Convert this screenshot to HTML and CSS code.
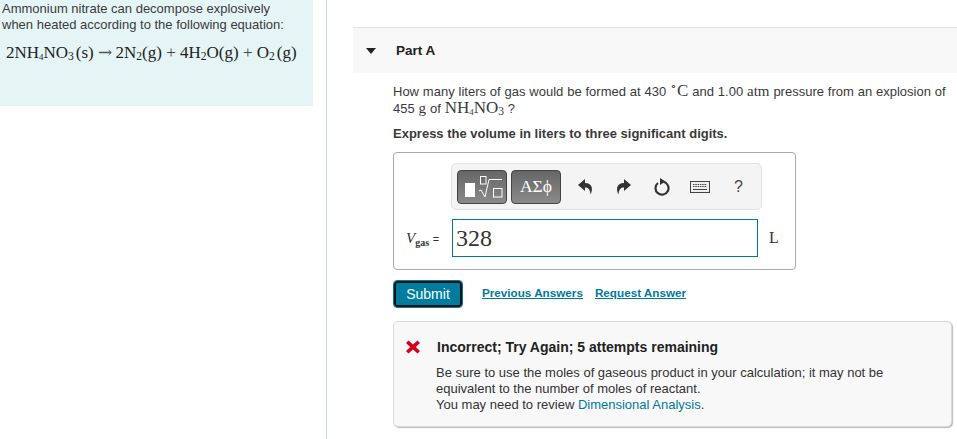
FILE: index.html
```html
<!DOCTYPE html>
<html lang="en">
<head>
    <meta charset="UTF-8">
    <meta name="viewport" content="width=device-width, initial-scale=1.0">
    <title>Part A</title>
    <link rel="stylesheet" href="styles.css">
</head>
<body>

    <div class="page">
        <!-- Intro panel on the left -->
        <aside class="sidebar">
            <div class="intro">
                <p class="intro-text">Ammonium nitrate can decompose explosively<br>when heated according to the following equation:</p>
                <p class="equation">2NH<sub class="tiny">4</sub>NO<sub>3</sub><span class="gap">(s)</span> <span class="arrow">→</span> 2N<sub>2</sub>(g) <span class="op">+</span> 4H<sub>2</sub>O(g) <span class="op">+</span> O<sub>2</sub><span class="gap">(g)</span></p>
            </div>
        </aside>

        <main class="content">
            <div class="part-header">
                <span class="caret"></span>
                <h2>Part A</h2>
            </div>

            <div class="part-body">
                <p class="question">How many liters of gas would be formed at 430 <span class="math"><sup>∘</sup><span class="big">C</span></span> and 1.00 <span class="math">atm</span> pressure from an explosion of<br>455 <span class="math">g</span> of <span class="math big">NH<sub class="tiny">4</sub>NO<sub>3</sub></span> ?</p>
                <p class="instruction">Express the volume in liters to three significant digits.</p>

                <!-- Answer box with math toolbar -->
                <div class="answer-box">
                    <div class="toolbar">
                        <button class="tool-btn templates">
                            <svg width="48" height="32" viewBox="0 0 48 32">
                                <rect x="7" y="12" width="10" height="14" fill="#fff"/>
                                <rect x="22.500" y="5.500" width="5.500" height="7.500" fill="none" stroke="#fff"/>
                                <path d="M21 20l2-1 4 7 4-17.500h13" fill="none" stroke="#fff"/>
                                <rect x="35.500" y="17.500" width="8.500" height="8.500" fill="none" stroke="#fff"/>
                            </svg>
                        </button>
                        <button class="tool-btn symbols">ΑΣϕ</button>

                        <div class="actions">
                            <svg class="action undo" width="16" height="16" viewBox="0 0 16 16"><path d="M7 0L0 6l7 6V8.500c3 0 5 1.500 5.500 7C15 11 15 4 7 4z" fill="#333"/></svg>
                            <svg class="action redo" width="16" height="16" viewBox="0 0 16 16"><path d="M9 0l7 6-7 6V8.500c-3 0-5 1.500-5.500 7C1 11 1 4 9 4z" fill="#333"/></svg>
                            <svg class="action reset" width="18" height="18" viewBox="0 0 18 18"><path d="M10.500 3.800a6.500 6.500 0 1 1-5.500 1.200" fill="none" stroke="#333" stroke-width="2.200"/><path d="M7 0l5.500 3.500L7 7z" fill="#333"/></svg>
                            <svg class="action keyboard" width="20" height="12" viewBox="0 0 20 12">
                                <rect x=".5" y=".5" width="19" height="11" fill="#eee" stroke="#444"/>
                                <path d="M3 3.500h14M3 5.500h14" stroke="#444" stroke-dasharray="1.500 .8"/>
                                <path d="M3 8.500h14" stroke="#444"/>
                            </svg>
                            <span class="help">?</span>
                        </div>
                    </div>

                    <div class="answer-row">
                        <span class="answer-label"><i>V</i><sub>gas</sub> <span class="equals">=</span></span>
                        <input class="answer-input" type="text" value="328">
                        <span class="unit">L</span>
                    </div>
                </div>

                <div class="submit-row">
                    <button class="submit">Submit</button>
                    <a class="answer-link first" href="#">Previous Answers</a>
                    <a class="answer-link" href="#">Request Answer</a>
                </div>

                <!-- Feedback -->
                <div class="feedback">
                    <div class="feedback-title">
                        <svg width="14" height="14" viewBox="0 0 14 14"><path d="M0 3L2.500 0.500 7 4.500 11.500 0.500 14 3 9.800 7 14 11 11.500 13.500 7 9.500 2.500 13.500 0 11 4.200 7z" fill="#d6001c"/></svg>
                        <strong>Incorrect; Try Again; 5 attempts remaining</strong>
                    </div>
                    <p class="feedback-text">Be sure to use the moles of gaseous product in your calculation; it may not be<br>equivalent to the number of moles of reactant.<br>You may need to review <a href="#">Dimensional Analysis</a>.</p>
                </div>
            </div>
        </main>
    </div>

</body>
</html>
```

FILE: styles.css
```css
body {
    font-family: 'Liberation Sans', Arial, sans-serif;
    font-size: 13px;
    color: #333;
    background-color: #fff;
    margin: 0;
}

p {
    margin: 0;
}

.page {
    display: flex;
    height: 439px;
    overflow: hidden;
}

/* Left column */
.sidebar {
    width: 326px;
    flex-shrink: 0;
    border-right: 1px solid #c6d6e6;
}

.intro {
    width: 311px;
    height: 105px;
    padding: 1px 0 0 2px;
    background-color: #e5f5f6;
}

.intro-text {
    line-height: 16px;
    color: #3a3a3a;
}

.equation {
    margin: 8px 0 0 4px;
    font-family: 'Liberation Serif', serif;
    font-size: 17px;
    line-height: 24px;
    white-space: nowrap;
    color: #222;
}

sub {
    font-size: 68%;
    line-height: 0;
    vertical-align: -2px;
}

sub.tiny {
    font-size: 52%;
}

.gap {
    margin-left: 2px;
}

.arrow {
    margin-right: -1px;
    font-family: 'DejaVu Serif', serif;
    font-size: 17px;
    line-height: 0;
    color: #555;
}

.op {
    color: #444;
}

/* Right column */
.content {
    flex: 1;
    padding: 27px 0 0 26px;
    min-width: 0;
}

.part-header {
    display: flex;
    align-items: center;
    height: 45px;
    border-top: 1px solid #e4e4e4;
    background-color: #f8f8f8;
}

.caret {
    width: 0;
    height: 0;
    margin-left: 13px;
    border-left: 5px solid transparent;
    border-right: 5px solid transparent;
    border-top: 6px solid #222;
}

.part-header h2 {
    margin: 0 0 0 20px;
    font-size: 13.500px;
    font-weight: bold;
    color: #222;
}

.part-body {
    padding: 10px 0 0 40px;
}

.question {
    line-height: 17px;
    white-space: nowrap;
    word-spacing: 0.25px;
    color: #3a3a3a;
}

.math {
    font-family: 'Liberation Serif', serif;
    font-size: 15px;
    line-height: 0;
}

.big {
    font-size: 17px;
}

.math sup {
    font-size: 11px;
    line-height: 0;
}

.instruction {
    margin-top: 9px;
    font-size: 13px;
    line-height: 16px;
    font-weight: bold;
    color: #3a3a3a;
}

.answer-box {
    width: 401px;
    height: 116px;
    margin-top: 10px;
    border: 1px solid #aaa;
    border-radius: 4px;
}

.toolbar {
    display: flex;
    align-items: center;
    width: 304px;
    height: 45px;
    margin: 10px 0 0 57px;
    padding-left: 5px;
    background-color: #f4f4f4;
    border: 1px solid #e2e2e2;
    border-radius: 5px;
}

.tool-btn {
    height: 34px;
    padding: 0;
    border: 1px solid #444;
    border-radius: 4px;
    background: linear-gradient(#666, #8a8a8a);
    color: #fff;
    font-family: 'Liberation Serif', serif;
    font-size: 17.500px;
}

.templates {
    width: 50px;
    margin-right: 4px;
}

.templates svg {
    display: block;
}

.symbols {
    width: 50px;
}

.actions {
    display: flex;
    align-items: center;
    margin-left: 17px;
}

.action {
    flex-shrink: 0;
}

.redo {
    margin-left: 21px;
}

.reset {
    margin-left: 22px;
}

.keyboard {
    margin-left: 19px;
}

.help {
    margin-left: 24px;
    font-size: 16px;
    color: #444;
}

.answer-row {
    display: flex;
    align-items: center;
    margin-top: 9px;
}

.answer-label {
    width: 58px;
    padding-left: 12px;
    box-sizing: border-box;
    font-family: 'Liberation Serif', serif;
    font-size: 15px;
    white-space: nowrap;
    color: #333;
}

.answer-label sub {
    font-size: 10px;
    font-weight: bold;
    vertical-align: -3px;
}

.equals {
    font-family: 'Liberation Sans', sans-serif;
    font-size: 11px;
}

.answer-input {
    width: 306px;
    height: 38px;
    box-sizing: border-box;
    padding: 0 3px;
    border: 1px solid #007a9c;
    font-family: 'Liberation Serif', serif;
    font-size: 24px;
    color: #333;
}

.unit {
    margin-left: 11px;
    font-family: 'Liberation Serif', serif;
    font-size: 16px;
}

.submit-row {
    display: flex;
    align-items: center;
    margin-top: 11px;
}

.submit {
    width: 68px;
    height: 26px;
    margin-left: 1px;
    padding: 0;
    background-color: #007d9e;
    color: #fff;
    border: 2px solid #111;
    outline: 1px solid #007d9e;
    border-radius: 3px;
    font-family: 'Liberation Sans', sans-serif;
    font-size: 14px;
}

.answer-link {
    margin-left: 12px;
    font-size: 11.700px;
    font-weight: bold;
    color: #007a9c;
    position: relative;
    top: -2px;
}

.answer-link.first {
    margin-left: 20px;
}

.feedback {
    box-sizing: border-box;
    width: 559px;
    height: 106px;
    margin-top: 14px;
    padding: 17px 12px;
    background-color: #f8f8f8;
    border: 1px solid #d8d8d8;
    border-radius: 5px;
    box-shadow: 1px 1px 1px #bbb;
}

.feedback-title {
    display: flex;
    align-items: center;
    gap: 17px;
    font-size: 14px;
    color: #222;
}

.feedback-text {
    margin: 10px 0 0 30px;
    line-height: 16px;
    color: #333;
}

.feedback-text a {
    color: #007a9c;
    text-decoration: none;
}
```
